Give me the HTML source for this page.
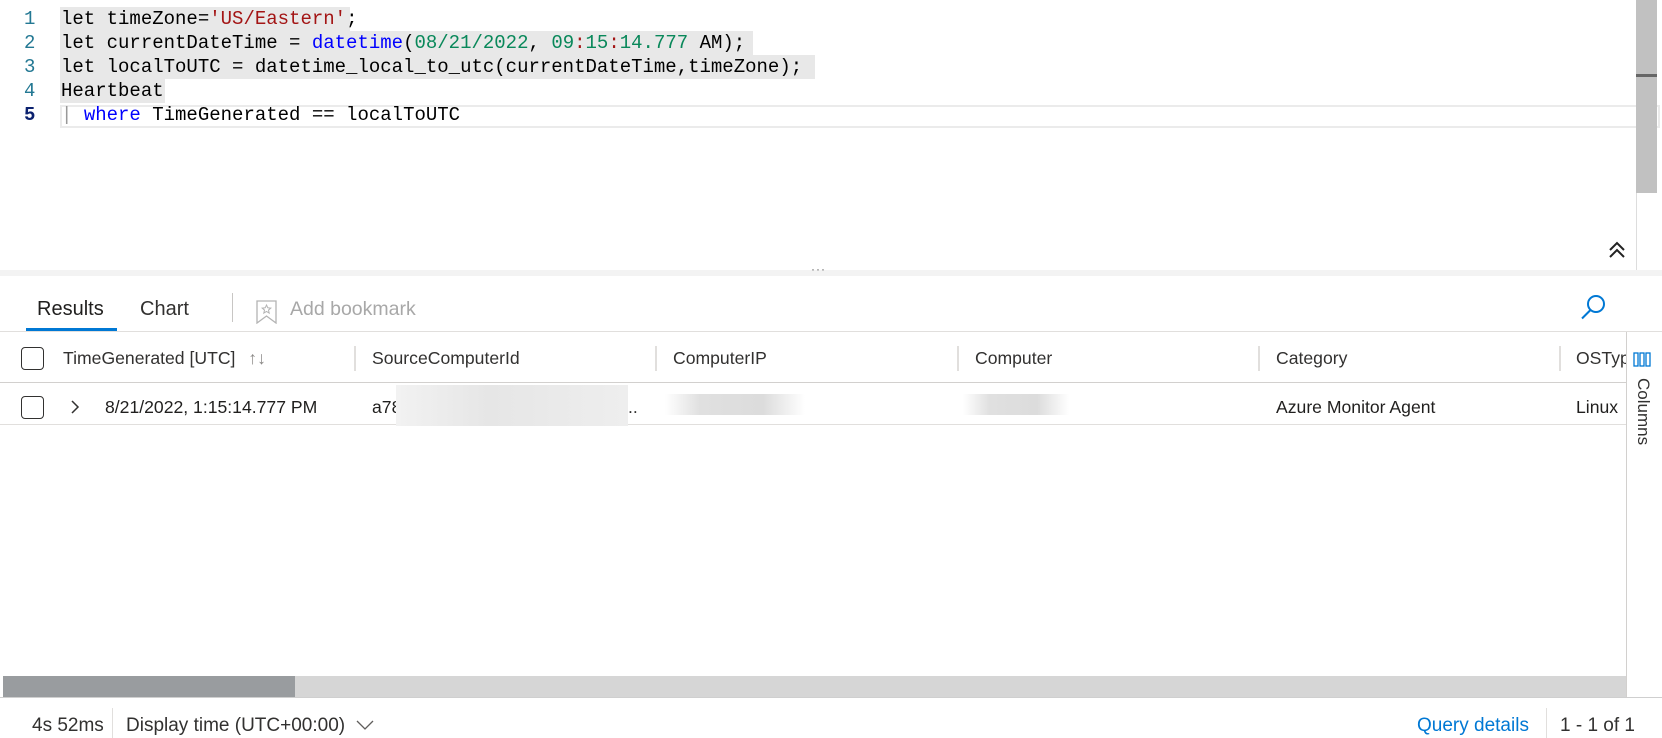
<!DOCTYPE html>
<html><head><meta charset="utf-8"><style>
*{margin:0;padding:0;box-sizing:border-box}
body{width:1662px;height:738px;background:#fff;position:relative;overflow:hidden;font-family:"Liberation Sans",sans-serif;color:#323130}
.a{position:absolute;white-space:nowrap}
.code{font-family:"Liberation Mono",monospace;font-size:19px;line-height:24px;color:#000}
.ln{color:#237893;font-family:"Liberation Mono",monospace;font-size:19px}
.hl{position:absolute;background:#e8e8e8;height:24px;left:60px}
.t{font-size:17.6px}
.f{font-size:19px}
.sep{position:absolute;width:2px;background:#e1dfdd}
.cb{position:absolute;width:23px;height:23px;border:1.5px solid #323130;border-radius:4px}
.blur{position:absolute;background:linear-gradient(90deg,#fff,#e0e0e0 25%,#dcdcdc 70%,#fff)}
</style></head><body>
<div class="hl" style="top:7px;width:290px"></div>
<div class="hl" style="top:31px;width:693px"></div>
<div class="hl" style="top:55px;width:755px"></div>
<div class="hl" style="top:79px;width:105px"></div>
<div style="position:absolute;left:60px;top:105px;width:1600px;height:23px;border:2px solid #ebebeb"></div>
<div class="a ln" style="left:24px;top:7px;line-height:24px">1<br>2<br>3<br>4<br><span style="color:#0b216f;font-weight:bold">5</span></div>
<div class="a code" style="left:61px;top:7px">let timeZone=<span style="color:#a31515">'US/Eastern'</span>;<br>let currentDateTime = <span style="color:#0000ff">datetime</span>(<span style="color:#09885a">08/21/2022</span>, <span style="color:#09885a">09</span><span style="color:#a31515">:</span><span style="color:#09885a">15</span><span style="color:#a31515">:</span><span style="color:#09885a">14.777</span> AM);<br>let localToUTC = datetime_local_to_utc(currentDateTime,timeZone);<br>Heartbeat<br><span style="color:#999">|</span> <span style="color:#0000ff">where</span> TimeGenerated == localToUTC</div>
<div style="position:absolute;left:1636px;top:0;width:1px;height:270px;background:#ddd"></div>
<div style="position:absolute;left:1636px;top:0;width:21px;height:193px;background:#c1c1c1"></div>
<div style="position:absolute;left:1636px;top:74px;width:21px;height:3px;background:#666"></div>
<svg class="a" style="left:1607px;top:240px" width="20" height="20" viewBox="0 0 20 20"><path d="M3 10l7-7 7 7M3 17l7-7 7 7" fill="none" stroke="#222" stroke-width="2"/></svg>
<div style="position:absolute;left:0;top:270px;width:1662px;height:6px;background:#f3f3f3"></div>
<div class="a" style="left:811px;top:262px;font-size:12px;color:#666;letter-spacing:1px">···</div>
<div class="a" style="left:37px;top:298px;font-size:20px;color:#201f1e">Results</div>
<div style="position:absolute;left:26px;top:328px;width:91px;height:3px;background:#0078d4"></div>
<div class="a" style="left:140px;top:298px;font-size:20px;color:#323130">Chart</div>
<div style="position:absolute;left:232px;top:293px;width:1px;height:29px;background:#c8c6c4"></div>
<svg class="a" style="left:256px;top:300px" width="21" height="24" viewBox="0 0 21 24"><path d="M1 1h19v22l-9.5-7L1 23z" fill="none" stroke="#b3b3b3" stroke-width="1.3"/><path d="M10.5 5l1.3 2.8 3 .3-2.3 2 .7 3-2.7-1.6-2.7 1.6.7-3-2.3-2 3-.3z" fill="none" stroke="#b3b3b3" stroke-width="1"/></svg>
<div class="a" style="left:290px;top:298px;font-size:19.5px;color:#a8a8a8">Add bookmark</div>
<svg class="a" style="left:1580px;top:294px" width="27" height="26" viewBox="0 0 27 26"><circle cx="16" cy="10" r="8" fill="none" stroke="#0078d4" stroke-width="2"/><path d="M10.5 16L2 24.5" stroke="#0078d4" stroke-width="2"/></svg>
<div style="position:absolute;left:0;top:331px;width:1662px;height:1px;background:#e1dfdd"></div>
<div style="position:absolute;left:0;top:382px;width:1626px;height:1px;background:#d2d0ce"></div>
<div style="position:absolute;left:0;top:424px;width:1626px;height:1px;background:#e1dfdd"></div>
<div class="cb" style="left:21px;top:347px"></div>
<div class="cb" style="left:21px;top:396px"></div>
<div class="a t" style="left:63px;top:348px">TimeGenerated [UTC] <span style="color:#8a8886;margin-left:8px">↑↓</span></div>
<div class="sep" style="left:354px;top:346px;height:25px"></div>
<div class="a t" style="left:372px;top:348px">SourceComputerId</div>
<div class="sep" style="left:655px;top:346px;height:25px"></div>
<div class="a t" style="left:673px;top:348px">ComputerIP</div>
<div class="sep" style="left:957px;top:346px;height:25px"></div>
<div class="a t" style="left:975px;top:348px">Computer</div>
<div class="sep" style="left:1258px;top:346px;height:25px"></div>
<div class="a t" style="left:1276px;top:348px">Category</div>
<div class="sep" style="left:1559px;top:346px;height:25px"></div>
<div class="a t" style="left:1576px;top:348px;width:50px;overflow:hidden">OSType</div>
<svg class="a" style="left:70px;top:400px" width="10" height="14" viewBox="0 0 10 14"><path d="M2 1l6 6-6 6" fill="none" stroke="#323130" stroke-width="1.5"/></svg>
<div class="a t" style="left:105px;top:397px;color:#201f1e">8/21/2022, 1:15:14.777 PM</div>
<div class="a t" style="left:372px;top:397px;color:#201f1e">a78</div>
<div class="blur" style="left:396px;top:385px;width:232px;height:41px;background:linear-gradient(90deg,#f2f2f2,#e6e6e6 40%,#eeeeee)"></div>
<div class="a t" style="left:628px;top:397px">..</div>
<div class="blur" style="left:665px;top:394px;width:140px;height:21px"></div>
<div class="blur" style="left:963px;top:394px;width:106px;height:21px"></div>
<div class="a t" style="left:1276px;top:397px;color:#201f1e">Azure Monitor Agent</div>
<div class="a t" style="left:1576px;top:397px;color:#201f1e">Linux</div>
<div style="position:absolute;left:1626px;top:332px;width:1px;height:365px;background:#d2d0ce"></div>
<svg class="a" style="left:1633px;top:352px" width="18" height="15" viewBox="0 0 18 15"><rect x="1" y="1" width="4" height="13" fill="none" stroke="#0078d4" stroke-width="1.3"/><rect x="7" y="1" width="4" height="13" fill="none" stroke="#0078d4" stroke-width="1.3"/><rect x="13" y="1" width="4" height="13" fill="none" stroke="#0078d4" stroke-width="1.3"/></svg>
<div class="a" style="left:1653px;top:378px;transform-origin:0 0;transform:rotate(90deg);font-size:17px;color:#323130">Columns</div>
<div style="position:absolute;left:3px;top:676px;width:1623px;height:21px;background:#d6d6d6"></div>
<div style="position:absolute;left:3px;top:676px;width:292px;height:21px;background:#999c9f"></div>
<div style="position:absolute;left:0;top:697px;width:1662px;height:1px;background:#cfcfcf"></div>
<div class="a f" style="left:32px;top:715px">4s 52ms</div>
<div style="position:absolute;left:112px;top:708px;width:1px;height:30px;background:#e1dfdd"></div>
<div class="a f" style="left:126px;top:715px">Display time (UTC+00:00)</div>
<svg class="a" style="left:356px;top:720px" width="18" height="10" viewBox="0 0 18 10"><path d="M1 1l8 8 8-8" fill="none" stroke="#605e5c" stroke-width="1.3"/></svg>
<div class="a f" style="left:1417px;top:715px;color:#0078d4">Query details</div>
<div style="position:absolute;left:1546px;top:708px;width:1px;height:30px;background:#e1dfdd"></div>
<div class="a f" style="left:1560px;top:715px">1 - 1 of 1</div>
</body></html>
